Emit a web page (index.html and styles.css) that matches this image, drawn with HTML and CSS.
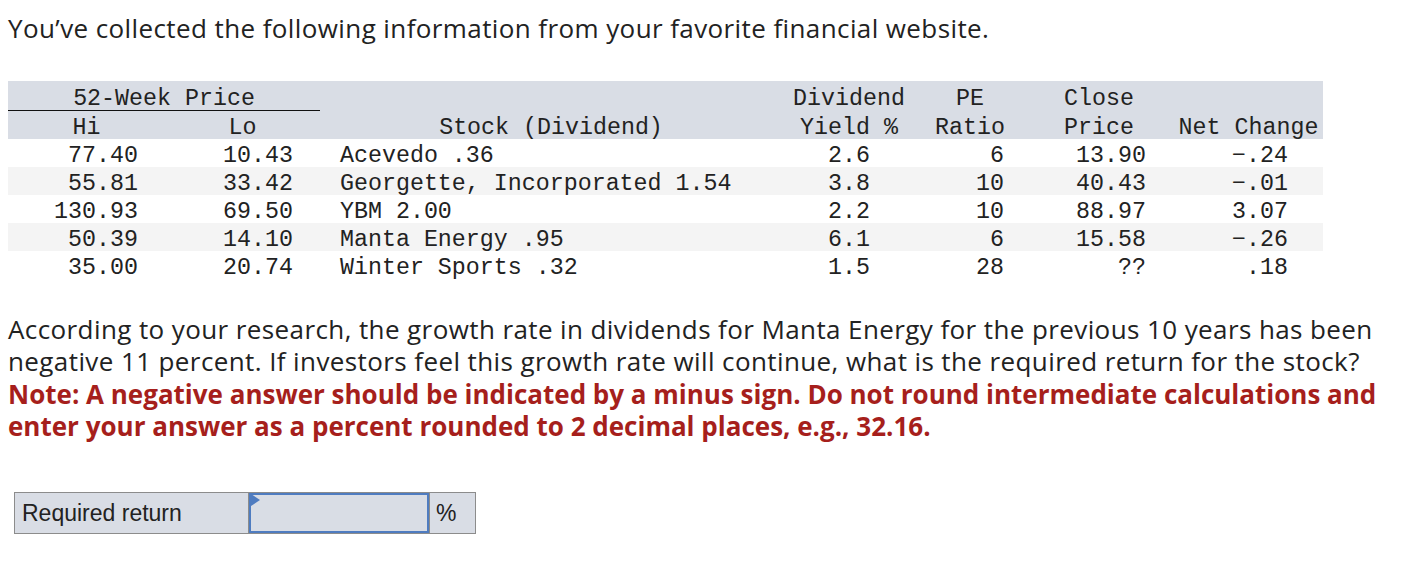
FILE: index.html
```html
<!DOCTYPE html>
<html>
<head>
<meta charset="utf-8">
<link rel="stylesheet" href="styles.css">
</head>
<body>
<p class="intro">You’ve collected the following information from your favorite financial website.</p>
<table class="quotes">
  <colgroup>
    <col class="c-hi"><col class="c-lo"><col class="c-stock"><col class="c-yield"><col class="c-pe"><col class="c-close"><col class="c-net">
  </colgroup>
  <thead>
    <tr class="h1">
      <th colspan="2" class="span52">52-Week Price</th>
      <th></th>
      <th>Dividend</th>
      <th>PE</th>
      <th>Close</th>
      <th></th>
    </tr>
    <tr class="h2">
      <th>Hi</th>
      <th>Lo</th>
      <th>Stock (Dividend)</th>
      <th>Yield %</th>
      <th>Ratio</th>
      <th>Price</th>
      <th>Net Change</th>
    </tr>
  </thead>
  <tbody>
    <tr><td class="r hi">77.40</td><td class="r lo">10.43</td><td class="l">Acevedo .36</td><td class="c">2.6</td><td class="r pe">6</td><td class="r cp">13.90</td><td class="r nc">−.24</td></tr>
    <tr><td class="r hi">55.81</td><td class="r lo">33.42</td><td class="l">Georgette, Incorporated 1.54</td><td class="c">3.8</td><td class="r pe">10</td><td class="r cp">40.43</td><td class="r nc">−.01</td></tr>
    <tr><td class="r hi">130.93</td><td class="r lo">69.50</td><td class="l">YBM 2.00</td><td class="c">2.2</td><td class="r pe">10</td><td class="r cp">88.97</td><td class="r nc">3.07</td></tr>
    <tr><td class="r hi">50.39</td><td class="r lo">14.10</td><td class="l">Manta Energy .95</td><td class="c">6.1</td><td class="r pe">6</td><td class="r cp">15.58</td><td class="r nc">−.26</td></tr>
    <tr><td class="r hi">35.00</td><td class="r lo">20.74</td><td class="l">Winter Sports .32</td><td class="c">1.5</td><td class="r pe">28</td><td class="r cp">??</td><td class="r nc">.18</td></tr>
  </tbody>
</table>
<p class="question">According to your research, the growth rate in dividends for Manta Energy for the previous 10 years has been<br>negative 11 percent. If investors feel this growth rate will continue, what is the required return for the stock?<br><strong class="note">Note: A negative answer should be indicated by a minus sign. Do not round intermediate calculations and<br>enter your answer as a percent rounded to 2 decimal places, e.g., 32.16.</strong></p>
<div class="answer">
  <div class="label">Required return</div>
  <div class="field"><span class="flag"></span></div>
  <div class="unit">%</div>
</div>
</body>
</html>
```
FILE: styles.css
```css
html, body { margin: 0; padding: 0; background: #fff; }
body {
  padding: 0 8px;
  font-family: "Open Sans", Lato, sans-serif;
  color: #222;
}
.intro {
  margin: 0;
  padding-top: 10px;
  font-size: 26px;
  line-height: 36px;
  letter-spacing: 0.4px;
}
.quotes {
  margin-top: 35px;
  border-collapse: collapse;
  table-layout: fixed;
  width: 1315px;
  font-family: "Liberation Mono", "Courier New", monospace;
  font-size: 23.3px;
  line-height: 22px;
  color: #222;
}
.c-hi { width: 157px; }
.c-lo { width: 155px; }
.c-stock { width: 462px; }
.c-yield { width: 134px; }
.c-pe { width: 108px; }
.c-close { width: 150px; }
.c-net { width: 149px; }
.quotes thead tr { background: #d9dde5; }
.quotes th {
  font-weight: normal;
  text-align: center;
  padding: 6px 0 0;
  white-space: nowrap;
}
.quotes .h1 th { height: 23px; }
.quotes .h2 th { height: 22px; }
.quotes .span52 { border-bottom: 1px solid #111; }
.quotes td {
  height: 22px;
  padding: 6px 0 0;
  white-space: nowrap;
}
.quotes tbody tr:nth-child(even) { background: #f4f4f4; }
.r { text-align: right; }
.quotes .l { text-align: left; padding-left: 20px; }
.c { text-align: center; }
.quotes .hi, .quotes .lo { padding-right: 27px; }
.quotes .pe { padding-right: 20px; }
.quotes .cp { padding-right: 28px; }
.quotes .nc { padding-right: 35px; }
.question {
  margin: 34px 0 0;
  font-size: 26px;
  line-height: 32.3px;
  letter-spacing: 0.4px;
}
.note { color: #a61f1c; font-weight: bold; letter-spacing: 0; }
.answer {
  margin: 50px 0 0 6px;
  display: flex;
  width: max-content;
  height: 40px;
  border: 1px solid #8c8c8c;
  background: #d9dde5;
  font-family: "Liberation Sans", Arial, sans-serif;
  font-size: 23px;
  color: #222;
}
.label {
  width: 226px;
  padding-left: 7px;
  display: flex;
  align-items: center;
  border-right: 1px solid #8c8c8c;
}
.field {
  position: relative;
  width: 180px;
  border: 2px solid #4f7cc0;
  box-sizing: border-box;
  background: #d9dde5;
}
.flag {
  position: absolute;
  left: 0;
  top: -1px;
  width: 0;
  height: 0;
  border-top: 6px solid transparent;
  border-bottom: 6px solid transparent;
  border-left: 9px solid #4f7cc0;
}
.unit {
  width: 39px;
  padding-left: 6px;
  display: flex;
  align-items: center;
  border-left: 1px solid #8c8c8c;
}
```
